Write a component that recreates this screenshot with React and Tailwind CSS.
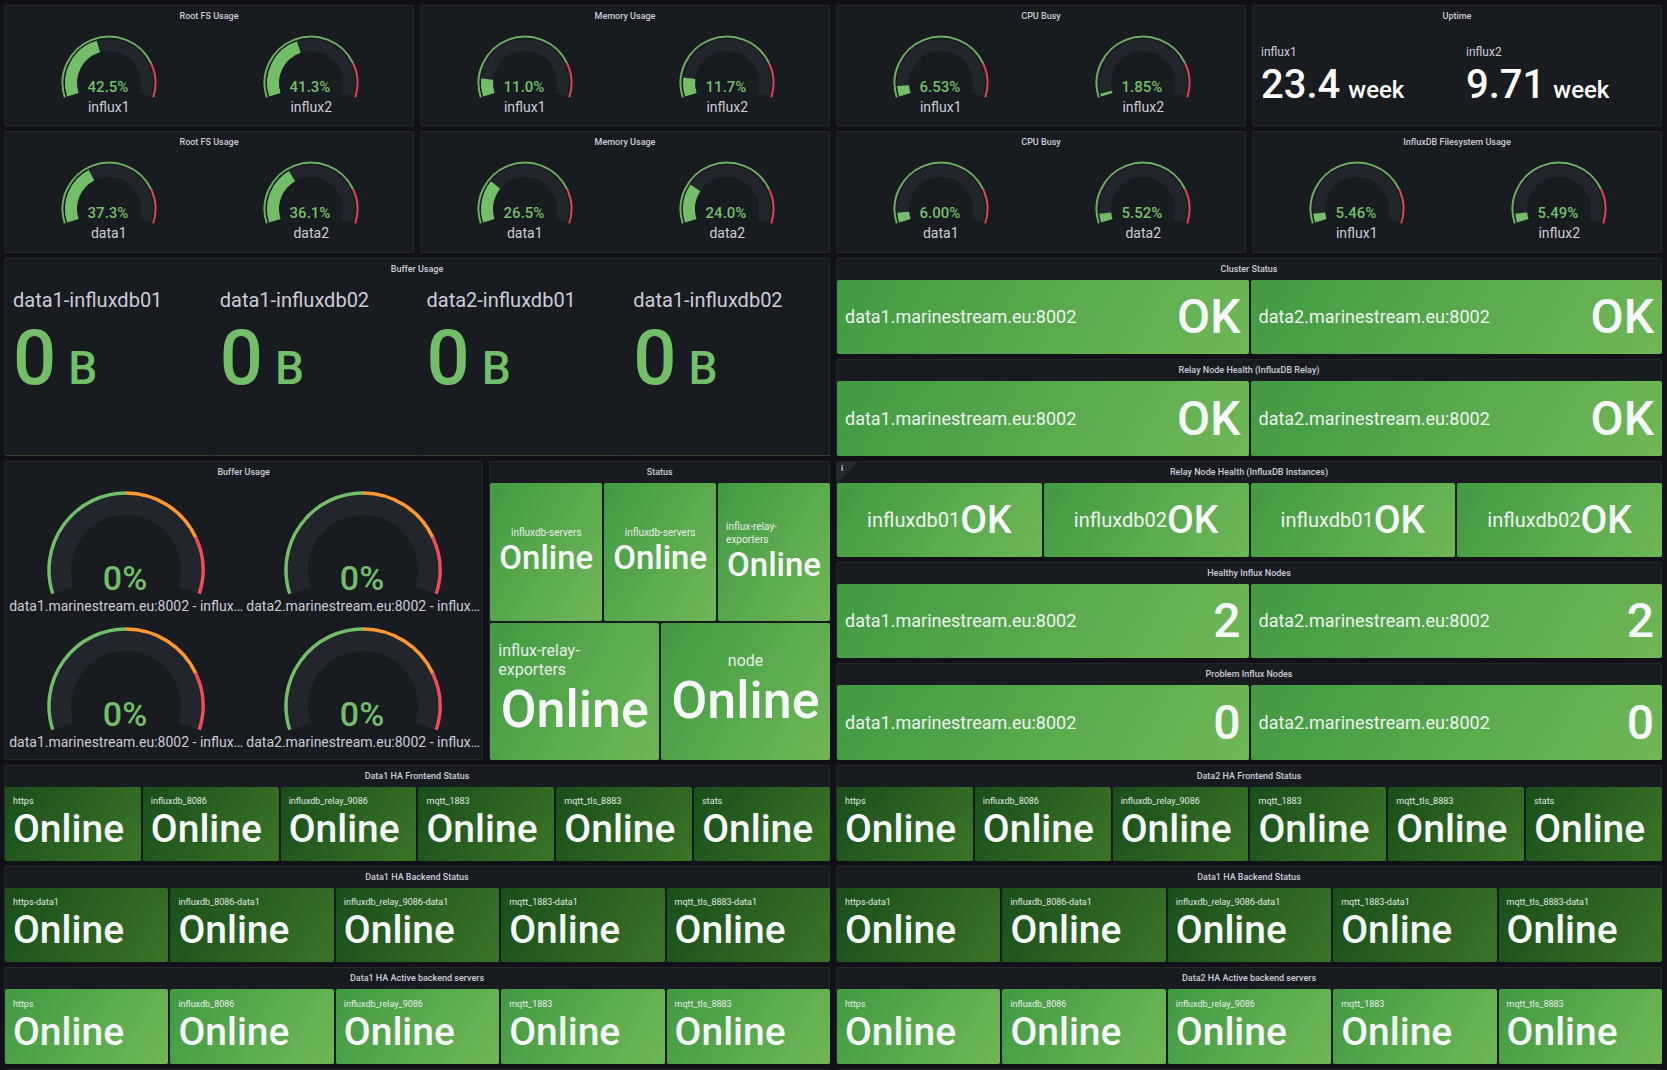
import clsx from 'clsx';

// Panel data
const topGauges = [
  { title: 'Root FS Usage', gauges: [['influx1', '42.5%', 42.5], ['influx2', '41.3%', 41.3]] },
  { title: 'Memory Usage', gauges: [['influx1', '11.0%', 11], ['influx2', '11.7%', 11.7]] },
  { title: 'CPU Busy', gauges: [['influx1', '6.53%', 6.53], ['influx2', '1.85%', 1.85]] },
];

const dataGauges = [
  { title: 'Root FS Usage', gauges: [['data1', '37.3%', 37.3], ['data2', '36.1%', 36.1]] },
  { title: 'Memory Usage', gauges: [['data1', '26.5%', 26.5], ['data2', '24.0%', 24]] },
  { title: 'CPU Busy', gauges: [['data1', '6.00%', 6], ['data2', '5.52%', 5.52]] },
  { title: 'InfluxDB Filesystem Usage', gauges: [['influx1', '5.46%', 5.46], ['influx2', '5.49%', 5.49]] },
];

const buffers = ['data1-influxdb01', 'data1-influxdb02', 'data2-influxdb01', 'data1-influxdb02'];

const bufferGauges = [
  'data1.marinestream.eu:8002 - influx…',
  'data2.marinestream.eu:8002 - influx…',
  'data1.marinestream.eu:8002 - influx…',
  'data2.marinestream.eu:8002 - influx…',
];

const hosts = ['data1.marinestream.eu:8002', 'data2.marinestream.eu:8002'];
const instances = ['influxdb01', 'influxdb02', 'influxdb01', 'influxdb02'];

const frontends = ['https', 'influxdb_8086', 'influxdb_relay_9086', 'mqtt_1883', 'mqtt_tls_8883', 'stats'];
const backends = ['https-data1', 'influxdb_8086-data1', 'influxdb_relay_9086-data1', 'mqtt_1883-data1', 'mqtt_tls_8883-data1'];
const activeServers = ['https', 'influxdb_8086', 'influxdb_relay_9086', 'mqtt_1883', 'mqtt_tls_8883'];

const GREEN = '#73bf69';
const ORANGE = '#ff9830';
const RED = '#f2495c';

const smallSteps = [[0, 80, GREEN], [80, 100, RED]];
const largeSteps = [[0, 50, GREEN], [50, 80, ORANGE], [80, 100, RED]];

// The dial sweeps 216 degrees and starts 18 degrees below the horizontal
const arc = (cx, cy, r, from, to) => {
  const point = (percent) => {
    const angle = ((162 + percent * 2.16) * Math.PI) / 180;
    return `${(cx + r * Math.cos(angle)).toFixed(2)} ${(cy + r * Math.sin(angle)).toFixed(2)}`;
  };
  const large = (to - from) * 2.16 > 180 ? 1 : 0;
  return `M ${point(from)} A ${r} ${r} 0 ${large} 1 ${point(to)}`;
};

const Panel = ({ title, className, info, children }) => (
  <section className={clsx('relative flex min-w-0 flex-col rounded-xs border border-[#25272c] bg-[#181b1f]', className)}>
    {info && (
      <div className="absolute top-0 left-0">
        <svg width="21" height="21" viewBox="0 0 21 21" aria-hidden="true">
          <path d="M0 0H21L0 21Z" fill="#25282e" />
          <path d="M4.5 3H6V4.2H4.5ZM4 5H6V7.6H6.6V8.4H3.8V7.6H4.6V5.8H4Z" fill="#a9abb8" />
        </svg>
      </div>
    )}
    {title && <h2 className="flex h-[21px] shrink-0 items-center justify-center text-[9px] font-medium">{title}</h2>}
    {children}
  </section>
);

const SmallGauge = ({ label, text, value }) => (
  <div className="flex min-w-0 flex-col items-center">
    <svg width="96" height="64" viewBox="0 0 96 64">
      <path d={arc(48, 48, 38, 0, 100)} fill="none" stroke="#22252b" strokeWidth="12" />
      <path d={arc(48, 48, 38, 0, value)} fill="none" stroke={GREEN} strokeWidth="12" />
      {smallSteps.map(([from, to, color]) => (
        <path key={from} d={arc(48, 48, 46.5, from, to)} fill="none" stroke={color} strokeWidth="2" opacity="0.9" />
      ))}
      <text x="47" y="57" textAnchor="middle" fontSize="15" fontWeight="500" fill={GREEN}>{text}</text>
    </svg>
    <span className="text-[14px] leading-4">{label}</span>
  </div>
);

const LargeGauge = ({ label }) => (
  <div className="flex min-w-0 flex-col items-center">
    <svg width="160" height="108" viewBox="0 0 160 108">
      <path d={arc(80, 80, 65, 0, 100)} fill="none" stroke="#22252b" strokeWidth="20" />
      {largeSteps.map(([from, to, color]) => (
        <path key={from} d={arc(80, 80, 77, from, to)} fill="none" stroke={color} strokeWidth="3.5" />
      ))}
      <text x="79" y="100" textAnchor="middle" fontSize="34" fontWeight="500" fill={GREEN}>0%</text>
    </svg>
    <span className="text-[14px] leading-4 whitespace-nowrap">{label}</span>
  </div>
);

const GaugePanel = ({ title, gauges }) => (
  <Panel title={title} className="col-span-6">
    <div className="grid grid-cols-2 gap-[5px] pt-2 pr-[3px] pl-[5px]">
      {gauges.map(([label, text, value]) => (
        <SmallGauge key={label} label={label} text={text} value={value} />
      ))}
    </div>
  </Panel>
);

// Tiles run over the right and bottom border of their panel
const Tiles = ({ className, children }) => (
  <div className={clsx('-mr-px -mb-px grid flex-1 gap-[2px]', className)}>{children}</div>
);

const tileLight = 'rounded-xs bg-[linear-gradient(120deg,#429a43,#6fb757)] text-[#f7f8fa]';
const tileDark = 'rounded-xs bg-[linear-gradient(120deg,#1a4e1b,#3a7427)] text-[#f7f8fa]';

const HostTiles = ({ title, value }) => (
  <Panel title={title} className="col-span-12">
    <Tiles className="grid-cols-2">
      {hosts.map((host) => (
        <div key={host} className={clsx(tileLight, 'flex items-center justify-between px-2')}>
          <span className="text-[18px] leading-6 opacity-95">{host}</span>
          <span className="text-[48px] leading-[48px] font-medium">{value}</span>
        </div>
      ))}
    </Tiles>
  </Panel>
);

const OnlineTiles = ({ title, names, dark }) => (
  <Panel title={title} className="col-span-12">
    <Tiles className={names.length === 6 ? 'grid-cols-6' : 'grid-cols-5'}>
      {names.map((name) => (
        <div key={name} className={clsx(dark ? tileDark : tileLight, 'flex flex-col justify-center px-2 pb-0.5')}>
          <span className="text-[9px] leading-3 opacity-90">{name}</span>
          <span className="text-[39px] leading-[44px] font-medium">Online</span>
        </div>
      ))}
    </Tiles>
  </Panel>
);

const StatusTile = ({ name, big, wrap }) => (
  <div className={clsx(tileLight, 'flex flex-col items-center justify-center px-2')}>
    <span
      className={clsx(
        'opacity-90',
        big ? 'text-[16px] leading-[19px]' : 'text-[10px] leading-[13px]',
        wrap && 'self-start whitespace-pre-line'
      )}
    >
      {name}
    </span>
    <span className={clsx('font-medium', big ? 'text-[52px] leading-[62px]' : 'text-[33px] leading-[38px]')}>Online</span>
  </div>
);

const Uptime = ({ name, value }) => (
  <div>
    <p className="text-[12px] leading-4">{name}</p>
    <p className="text-[40px] leading-[50px] font-medium text-white">
      {value}
      <span className="ml-2 text-[24px]">week</span>
    </p>
  </div>
);

const App = () => {
  return (
    <main className="h-screen overflow-hidden bg-[#111217] pt-[5px] pr-[5px] pl-1 font-[Roboto,sans-serif] text-[#ccccdc]">
      <div className="grid grid-cols-24 grid-rows-[121px_122px_96px_97px_96px_96px_97px_96px_96px_97px_96px] gap-x-[6px] gap-y-[5px]">
        {topGauges.map((panel) => (
          <GaugePanel key={panel.title} {...panel} />
        ))}
        <Panel title="Uptime" className="col-span-6">
          <div className="grid grid-cols-2 gap-[10px] pt-[17px] pl-2">
            <Uptime name="influx1" value="23.4" />
            <Uptime name="influx2" value="9.71" />
          </div>
        </Panel>

        {dataGauges.map((panel) => (
          <GaugePanel key={panel.title} {...panel} />
        ))}

        <Panel title="Buffer Usage" className="col-span-12 row-span-2">
          <Tiles className="grid-cols-4">
            {buffers.map((name, index) => (
              <div key={index} className="border-b border-[#2e4430] px-2 pt-2">
                <p className="text-[20px] leading-6">{name}</p>
                <p className="text-[76px] leading-[92px] font-medium text-[#73bf69]">
                  0<span className="ml-3 text-[46px]">B</span>
                </p>
              </div>
            ))}
          </Tiles>
        </Panel>
        <HostTiles title="Cluster Status" value="OK" />
        <HostTiles title="Relay Node Health (InfluxDB Relay)" value="OK" />

        <Panel title="Buffer Usage" className="col-span-7 row-span-3">
          <div className="grid grid-cols-2 gap-x-[5px] gap-y-3 pt-[7px] pr-[3px] pl-[5px]">
            {bufferGauges.map((name, index) => (
              <LargeGauge key={index} label={name} />
            ))}
          </div>
        </Panel>
        <Panel title="Status" className="col-span-5 row-span-3">
          <div className="-mr-px -mb-px flex flex-1 flex-col gap-[2px]">
            <div className="grid flex-1 grid-cols-3 gap-[2px]">
              <StatusTile name="influxdb-servers" />
              <StatusTile name="influxdb-servers" />
              <StatusTile name={'influx-relay-\nexporters'} wrap />
            </div>
            <div className="grid flex-1 grid-cols-2 gap-[2px]">
              <StatusTile name={'influx-relay-\nexporters'} big wrap />
              <StatusTile name="node" big />
            </div>
          </div>
        </Panel>
        <Panel title="Relay Node Health (InfluxDB Instances)" className="col-span-12" info>
          <Tiles className="grid-cols-4">
            {instances.map((name, index) => (
              <div key={index} className={clsx(tileLight, 'flex items-center justify-center')}>
                <span className="text-[20px] leading-6 opacity-95">{name}</span>
                <span className="text-[39px] leading-[44px] font-medium">OK</span>
              </div>
            ))}
          </Tiles>
        </Panel>
        <HostTiles title="Healthy Influx Nodes" value="2" />
        <HostTiles title="Problem Influx Nodes" value="0" />

        <OnlineTiles title="Data1 HA Frontend Status" names={frontends} dark />
        <OnlineTiles title="Data2 HA Frontend Status" names={frontends} dark />
        <OnlineTiles title="Data1 HA Backend Status" names={backends} dark />
        <OnlineTiles title="Data1 HA Backend Status" names={backends} dark />
        <OnlineTiles title="Data1 HA Active backend servers" names={activeServers} />
        <OnlineTiles title="Data2 HA Active backend servers" names={activeServers} />

        <Panel className="col-span-12" />
        <Panel className="col-span-12" />
      </div>
    </main>
  );
};

export default App;
